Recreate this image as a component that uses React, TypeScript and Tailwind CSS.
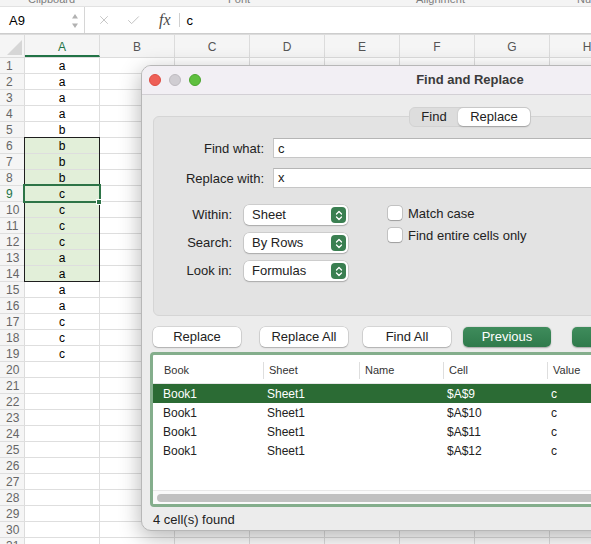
import { Check, X } from 'lucide-react';

const COLS = ['A', 'B', 'C', 'D', 'E', 'F', 'G', 'H'];
const DATA = ['a', 'a', 'a', 'a', 'b', 'b', 'b', 'b', 'c', 'c', 'c', 'c', 'a', 'a', 'a', 'a', 'c', 'c', 'c'];
const ROWS = Array.from({ length: 31 }, (_, i) => i + 1);

const RESULTS = [
  { book: 'Book1', sheet: 'Sheet1', cell: '$A$9', value: 'c' },
  { book: 'Book1', sheet: 'Sheet1', cell: '$A$10', value: 'c' },
  { book: 'Book1', sheet: 'Sheet1', cell: '$A$11', value: 'c' },
  { book: 'Book1', sheet: 'Sheet1', cell: '$A$12', value: 'c' },
];

function Popup({ value }: { value: string }) {
  return (
    <div className="flex h-[20px] w-[104px] items-center rounded-[5px] bg-white pl-[8px] pr-[2px] text-[13px] shadow-[0_0_0_0.5px_rgba(0,0,0,0.18),0_1px_1.5px_rgba(0,0,0,0.18)]">
      <span className="flex-1">{value}</span>
      <span className="flex h-[16px] w-[15px] items-center justify-center rounded-[4px] bg-[#3a7f51]">
        <svg width="8" height="11" viewBox="0 0 8 11">
          <path d="M1.5 4 L4 1.5 L6.5 4 M1.5 7 L4 9.5 L6.5 7" stroke="white" strokeWidth="1.3" fill="none" strokeLinecap="round" strokeLinejoin="round" />
        </svg>
      </span>
    </div>
  );
}

function Checkbox({ label }: { label: string }) {
  return (
    <div className="flex h-[16px] items-center">
      <span className="h-[14px] w-[14px] rounded-[3px] bg-white shadow-[0_0_0_0.5px_rgba(0,0,0,0.25),0_0.5px_1px_rgba(0,0,0,0.2)]" />
      <span className="ml-[6px] pt-[1px] text-[13px] text-[#222]">{label}</span>
    </div>
  );
}

function Btn({ label, green, className = '' }: { label: string; green?: boolean; className?: string }) {
  return (
    <div
      className={`flex h-[20px] w-[88px] shrink-0 items-center justify-center rounded-[5px] text-[13px] ${
        green
          ? 'bg-gradient-to-b from-[#3f8c5c] to-[#2f7a4b] text-white shadow-[0_0.5px_1.5px_rgba(0,0,0,0.3)]'
          : 'bg-white text-[#222] shadow-[0_0_0_0.5px_rgba(0,0,0,0.18),0_1px_1.5px_rgba(0,0,0,0.18)]'
      } ${className}`}
    >
      {label}
    </div>
  );
}

export default function App() {
  return (
    <div className="relative h-[544px] w-[591px] overflow-hidden bg-white font-['Liberation_Sans',Arial,sans-serif] text-black">
      {/* ribbon group captions, cut off at the top */}
      <div className="h-[7px] overflow-hidden border-b border-[#e2e2e2] bg-[#f4f4f4]">
        <div className="-mt-[7px] flex whitespace-nowrap text-[11px] leading-[13px] text-[#7d7d7d]">
          <span className="ml-[28px]">Clipboard</span>
          <span className="ml-[153px]">Font</span>
          <span className="ml-[166px]">Alignment</span>
          <span className="ml-[112px]">Number</span>
        </div>
      </div>

      {/* formula bar */}
      <div className="flex h-[27px] items-center border-b border-[#cdcdcd]">
        <div className="flex h-full w-[85px] shrink-0 items-center border-r border-[#d6d6d6] pl-[9px] pt-[1px] text-[13px]">
          <span className="flex-1">A9</span>
          <svg width="8" height="18" viewBox="0 0 8 18" className="mr-[5px]">
            <path d="M4 2 L7 6.5 L1 6.5 Z M4 16 L7 11.5 L1 11.5 Z" fill="#b2b2b2" />
          </svg>
        </div>
        <X size={14} strokeWidth={1.6} className="ml-[12px] text-[#c3c3c3]" />
        <Check size={15} strokeWidth={1.6} className="ml-[15px] text-[#c3c3c3]" />
        <span className="ml-[18px] font-['Liberation_Serif',serif] text-[16px] italic text-[#4a4a4a]">fx</span>
        <span className="ml-[8px] h-[14px] w-px bg-[#d0d0d0]" />
        <span className="ml-[7px] pt-[1px] text-[13px]">c</span>
      </div>

      {/* column header */}
      <div className="flex h-[24px] border-b border-t border-[#dcdcdc] bg-[#f5f5f5] text-[12px] text-[#555]">
        <div className="relative w-[25px] shrink-0 border-r border-[#dcdcdc]">
          <svg width="25" height="22" viewBox="0 0 25 22" className="absolute left-0 top-0">
            <path d="M22 5 L22 20 L7 20 Z" fill="#d6d6d6" />
          </svg>
        </div>
        {COLS.map((c) => (
          <div
            key={c}
            className={`flex w-[75px] shrink-0 items-center justify-center border-r border-[#dcdcdc] ${
              c === 'A' ? 'border-b-2 border-b-[#217346] pt-[3px] text-[#217346]' : 'pt-[2px]'
            }`}
          >
            {c}
          </div>
        ))}
      </div>

      {/* grid */}
      <div className="relative">
        {ROWS.map((r) => {
          const selected = r >= 6 && r <= 14;
          return (
            <div key={r} className="flex h-[16px] border-b border-[#dedede]">
              <div
                className={`w-[25px] shrink-0 border-r border-[#dcdcdc] bg-[#f5f5f5] pl-[6px] text-[12px] leading-[17px] ${
                  r === 9 ? 'text-[#217346]' : 'text-[#666]'
                }`}
              >
                {r}
              </div>
              {COLS.map((c) => (
                <div
                  key={c}
                  className={`w-[75px] shrink-0 border-r border-[#dedede] text-center text-[12px] leading-[17px] ${
                    c === 'A' && selected ? 'bg-[#e2efd9]' : ''
                  }`}
                >
                  {c === 'A' ? DATA[r - 1] ?? '' : ''}
                </div>
              ))}
            </div>
          );
        })}
        {/* selection range and active cell */}
        <div className="absolute left-[24px] top-[79px] h-[145px] w-[76px] border border-[#1e1e1e]" />
        <div className="absolute left-[23px] top-[126px] h-[19px] w-[78px] border-2 border-[#2d7447]" />
        <div className="absolute left-[96px] top-[141px] h-[6px] w-[6px] border border-white bg-[#2d7447]" />
      </div>

      {/* Find and Replace dialog */}
      <div className="absolute left-[141px] top-[65px] flex h-[466px] w-[658px] flex-col overflow-hidden rounded-[10px] border border-[#b7b7b7] bg-[#ececec] shadow-[0_6px_22px_rgba(0,0,0,0.3)]">
        <div className="grid h-[29px] shrink-0 grid-cols-[1fr_auto_1fr] items-center border-b border-[#d3d0d5] bg-[#f2eff4]">
          <div className="flex gap-[8px] pl-[7px]">
            <span className="h-[12px] w-[12px] rounded-full border border-[#dd4c43] bg-[#ee5f57]" />
            <span className="h-[12px] w-[12px] rounded-full border border-[#bdbabf] bg-[#d0cdd2]" />
            <span className="h-[12px] w-[12px] rounded-full border border-[#4ba52f] bg-[#5fc03f]" />
          </div>
          <div className="text-[13px] font-bold text-[#3b3b3b]">Find and Replace</div>
          <div />
        </div>

        <div className="relative z-10 mx-auto mt-[12px] flex h-[20px] w-[122px] items-center rounded-[6px] border border-[#d2d2d2] bg-[#dddddd] text-[13px] text-[#222]">
          <span className="w-[48px] text-center">Find</span>
          <span className="flex h-[18px] flex-1 items-center justify-center rounded-[5px] bg-white shadow-[0_0.5px_1.5px_rgba(0,0,0,0.25)]">Replace</span>
        </div>

        <div className="mx-[11px] -mt-[11px] h-[200px] shrink-0 rounded-[6px] border border-[#d5d5d5] bg-[#e3e3e3] pt-[21px] text-[13px] text-[#222]">
          <div className="flex items-center">
            <span className="w-[110px] pt-[1px] text-right">Find what:</span>
            <div className="ml-[9px] mr-[14px] flex h-[20px] flex-1 items-center border border-[#c6c6c6] border-t-[#b5b5b5] bg-white pl-[4px]">c</div>
          </div>
          <div className="mt-[9px] flex items-center">
            <span className="w-[110px] pt-[1px] text-right">Replace with:</span>
            <div className="ml-[9px] mr-[14px] flex h-[20px] flex-1 items-center border border-[#c6c6c6] border-t-[#b5b5b5] bg-white pl-[4px]">x</div>
          </div>
          <div className="mt-[17px] flex">
            <div className="flex flex-col gap-[8px]">
              {[
                ['Within:', 'Sheet'],
                ['Search:', 'By Rows'],
                ['Look in:', 'Formulas'],
              ].map(([label, value]) => (
                <div key={label} className="flex items-center">
                  <span className="w-[78px] text-right">{label}</span>
                  <div className="ml-[12px]">
                    <Popup value={value} />
                  </div>
                </div>
              ))}
            </div>
            <div className="ml-[40px] flex flex-col gap-[6px]">
              <Checkbox label="Match case" />
              <Checkbox label="Find entire cells only" />
            </div>
          </div>
        </div>

        <div className="ml-[11px] mt-[11px] flex">
          <Btn label="Replace" />
          <Btn label="Replace All" className="ml-[19px]" />
          <Btn label="Find All" className="ml-[15px]" />
          <Btn label="Previous" green className="ml-[12px]" />
          <Btn label="Next" green className="ml-[21px]" />
        </div>

        <div className="mx-[8px] mt-[5px] flex h-[155px] shrink-0 flex-col overflow-hidden rounded-[4px] border-[3px] border-[#84ae8c] bg-white">
          <div className="flex h-[29px] shrink-0 items-center border-b border-[#e6e6e6] pt-[2px] text-[11px] text-[#333]">
            <span className="w-[110px] pl-[11px]">Book</span>
            {[
              ['Sheet', 'w-[96px]'],
              ['Name', 'w-[84px]'],
              ['Cell', 'w-[104px]'],
              ['Value', 'flex-1'],
            ].map(([label, w]) => (
              <span key={label} className={`flex items-center ${w}`}>
                <span className="h-[17px] w-px bg-[#dedede]" />
                <span className="pl-[5px]">{label}</span>
              </span>
            ))}
          </div>
          {RESULTS.map((row, i) => (
            <div
              key={row.cell}
              className={`flex h-[19px] shrink-0 items-center text-[12px] ${i === 0 ? 'bg-[#2b6b34] text-white' : 'text-[#222]'}`}
            >
              <span className="w-[110px] pl-[10px]">{row.book}</span>
              <span className="w-[96px] pl-[4px]">{row.sheet}</span>
              <span className="w-[84px]" />
              <span className="w-[104px] pl-[4px]">{row.cell}</span>
              <span className="flex-1 pl-[4px]">{row.value}</span>
            </div>
          ))}
          <div className="flex-1" />
          <div className="h-[14px] shrink-0 border-t border-[#e8e8e8] bg-[#fafafa] pl-[4px] pt-[3px]">
            <div className="h-[8px] rounded-full bg-[#c1c1c1]" />
          </div>
        </div>

        <div className="ml-[11px] mt-[3px] text-[13px] text-[#222]">4 cell(s) found</div>
      </div>
    </div>
  );
}
